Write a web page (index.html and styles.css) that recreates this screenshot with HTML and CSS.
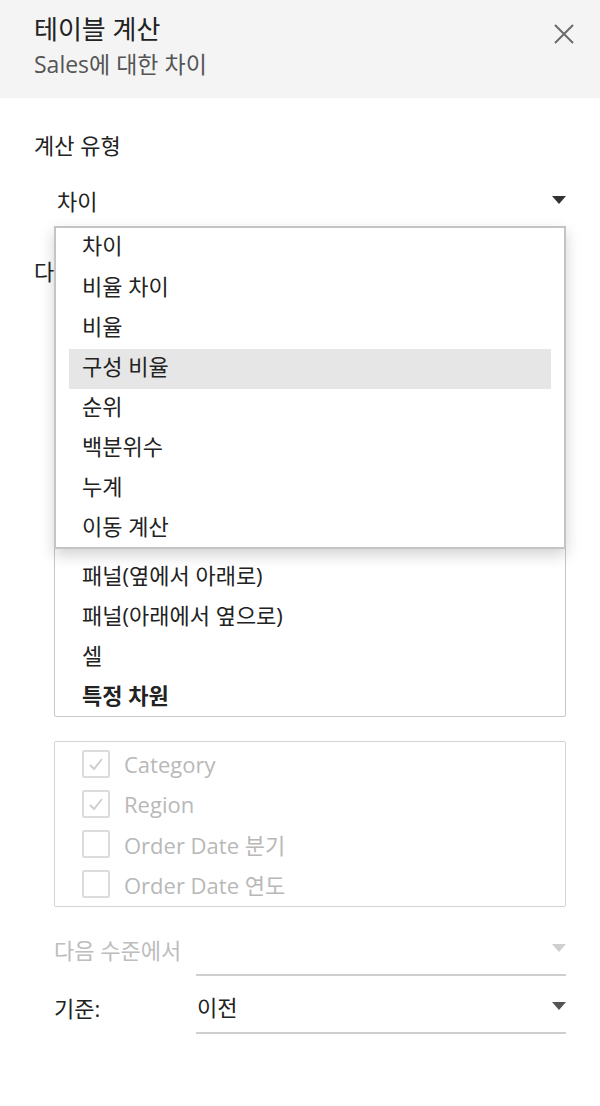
FILE: index.html
```html
<!DOCTYPE html>
<html lang="ko">
<head>
<meta charset="utf-8">
<link rel="stylesheet" href="styles.css">
</head>
<body>
<div class="panel">
  <header class="head">
    <div class="titles">
      <div class="title">테이블 계산</div>
      <div class="subtitle">Sales에 대한 차이</div>
    </div>
    <svg class="close" width="22" height="22" viewBox="0 0 22 22"><path d="M2 2L20 20M20 2L2 20" stroke="#6a6a6a" stroke-width="2" fill="none"/></svg>
  </header>

  <main class="body">
    <div class="label">계산 유형</div>
    <div class="select">
      <span>차이</span>
      <svg class="arrow" width="14" height="8" viewBox="0 0 14 8"><path d="M0 0H14L7 8Z" fill="#333"/></svg>
    </div>

    <div class="label label-calc">다음을 사용하여 계산</div>
    <div class="listbox">
      <div class="li">테이블(옆으로)</div>
      <div class="li">테이블(아래로)</div>
      <div class="li">테이블(옆에서 아래로)</div>
      <div class="li">테이블(아래에서 옆으로)</div>
      <div class="li">패널(옆으로)</div>
      <div class="li">패널(아래로)</div>
      <div class="li">패널(옆에서 아래로)</div>
      <div class="li">패널(아래에서 옆으로)</div>
      <div class="li">셀</div>
      <div class="li bold">특정 차원</div>
    </div>

    <div class="checks">
      <div class="ck"><span class="box"><svg width="16" height="14" viewBox="0 0 16 14"><path d="M2 8L6 12L14 2" stroke="#cfcfcf" stroke-width="2" fill="none"/></svg></span>Category</div>
      <div class="ck"><span class="box"><svg width="16" height="14" viewBox="0 0 16 14"><path d="M2 8L6 12L14 2" stroke="#cfcfcf" stroke-width="2" fill="none"/></svg></span>Region</div>
      <div class="ck"><span class="box"></span>Order Date 분기</div>
      <div class="ck"><span class="box"></span>Order Date 연도</div>
    </div>

    <div class="row disabled">
      <div class="rlabel">다음 수준에서</div>
      <div class="rsel">
        <span></span>
        <svg class="arrow" width="14" height="8" viewBox="0 0 14 8"><path d="M0 0H14L7 8Z" fill="#cfcfcf"/></svg>
      </div>
    </div>
    <div class="row">
      <div class="rlabel">기준:</div>
      <div class="rsel">
        <span>이전</span>
        <svg class="arrow" width="14" height="8" viewBox="0 0 14 8"><path d="M0 0H14L7 8Z" fill="#555"/></svg>
      </div>
    </div>
  </main>

  <div class="menu">
    <div class="mi">차이</div>
    <div class="mi">비율 차이</div>
    <div class="mi">비율</div>
    <div class="mi hover">구성 비율</div>
    <div class="mi">순위</div>
    <div class="mi">백분위수</div>
    <div class="mi">누계</div>
    <div class="mi">이동 계산</div>
  </div>
</div>
</body>
</html>
```

FILE: styles.css
```css
* { box-sizing: border-box; }
html, body { margin: 0; padding: 0; background: #fff; }
body {
  font-family: "Open Sans", "Noto Sans CJK KR", sans-serif;
  color: #222;
  width: 600px;
  height: 1106px;
  overflow: hidden;
}
.panel { position: relative; width: 600px; height: 1106px; }

.head {
  background: #f4f4f4;
  height: 98px;
  padding: 12px 25px 0 34px;
  display: flex;
  justify-content: space-between;
  align-items: flex-start;
}
.title { font-size: 26px; font-weight: 400; line-height: 34px; color: #222; }
.subtitle { font-size: 23px; line-height: 36px; color: #555; }
.close { margin-top: 11px; }

.body { padding: 30px 34px 0 34px; }
.label { font-size: 22px; line-height: 34px; color: #222; }
.select {
  margin-top: 21px;
  padding-left: 23px;
  height: 34px;
  display: flex;
  align-items: center;
  justify-content: space-between;
  font-size: 22px;
}

.label-calc { margin-top: 37px; }
.listbox {
  margin-top: 28px;
  margin-left: 20px;
  border: 1px solid #c8c8c8;
  border-radius: 2px;
}
.li {
  height: 40px;
  line-height: 36px;
  padding-left: 27px;
  font-size: 22px;
  color: #222;
}
.li.bold { font-weight: 700; height: 39px; }

.checks {
  margin-top: 24px;
  margin-left: 20px;
  border: 1px solid #d4d4d4;
  border-radius: 2px;
  padding: 2px 0;
}
.ck {
  height: 40px;
  display: flex;
  align-items: center;
  padding-left: 27px;
  font-size: 22px;
  color: #b8b8b8;
}
.box {
  width: 28px;
  height: 28px;
  border: 2px solid #dcdcdc;
  border-radius: 2px;
  margin-right: 14px;
  display: flex;
  align-items: center;
  justify-content: center;
}

.row {
  margin-left: 20px;
  display: flex;
  align-items: stretch;
  height: 58px;
}
.disabled { margin-top: 11px; }
.rlabel {
  width: 142px;
  font-size: 22px;
  display: flex;
  align-items: center;
  padding-top: 4px;
  color: #222;
}
.disabled .rlabel { color: #bdbdbd; }
.rsel {
  flex: 1;
  border-bottom: 2px solid #cfcfcf;
  display: flex;
  align-items: center;
  justify-content: space-between;
  font-size: 22px;
  padding-left: 1px;
  padding-top: 4px;
  color: #222;
}

.menu {
  position: absolute;
  left: 54px;
  top: 226px;
  width: 512px;
  height: 323px;
  background: #fff;
  border: 2px solid #c4c4c4;
  box-shadow: 0 6px 14px rgba(0,0,0,0.18);
  padding: 0 13px;
}
.mi {
  height: 40px;
  line-height: 34px;
  padding-left: 13px;
  font-size: 22px;
  color: #222;
}
.mi:first-child { height: 41px; line-height: 35px; }
.mi.hover { background: #e6e6e6; }
```
